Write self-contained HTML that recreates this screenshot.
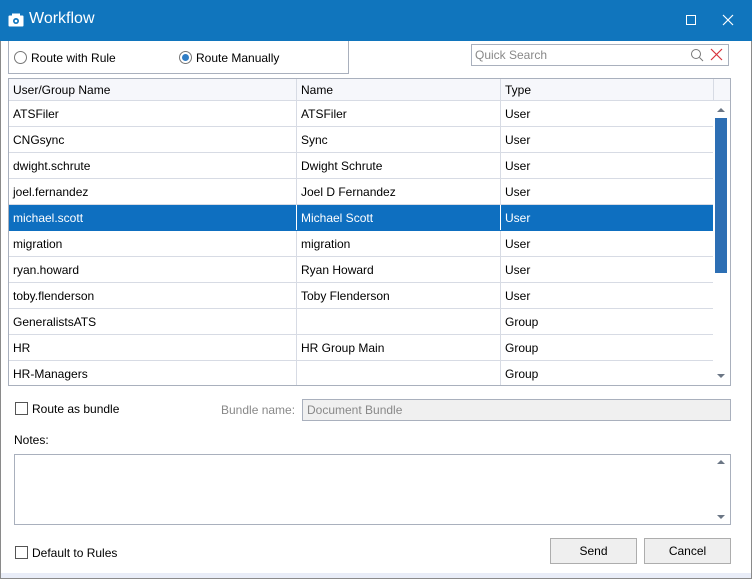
<!DOCTYPE html>
<html><head><style>
*{box-sizing:border-box;margin:0;padding:0}
body{width:752px;height:579px;position:relative;background:#e9edf8;font-family:"Liberation Sans",sans-serif;font-size:12px;color:#000;overflow:hidden}
.abs{position:absolute}
#win{left:0;top:0;width:752px;height:579px;border:1px solid #8a8a8a}
#title{left:0;top:0;width:752px;height:41px;background:#1075bd;color:#fff}
#body{left:1px;top:41px;width:750px;height:532px;background:#fff}
.radio{width:13px;height:13px;border:1px solid #777;border-radius:50%;background:#fff}
.cb{width:13px;height:13px;border:1px solid #555;background:#fff}
table{border-collapse:collapse;table-layout:fixed}
td{border:1px solid #d7dbe4;height:26px;padding-left:4px;white-space:nowrap;overflow:hidden}
tr.h td{height:22px;background:#f6f7fb}
tr.sel td{background:#0e6fc0;color:#fff;border-color:#0e6fc0 #fff #0e6fc0 #fff}
.btn{height:26px;background:#efefef;border:1px solid #adadad;text-align:center;line-height:24px}
</style></head><body>
<div id="win" class="abs"></div>
<div id="title" class="abs">
 <svg class="abs" style="left:8px;top:13px" width="16" height="14" viewBox="0 0 16 14"><rect x="0.5" y="2.5" width="15" height="11" fill="#fff" rx="1"/><rect x="4" y="0.5" width="8" height="3" fill="#fff"/><circle cx="8" cy="8" r="3" fill="#1075bd"/><circle cx="8" cy="8" r="1.3" fill="#fff"/></svg>
 <div class="abs" style="left:29px;top:10px;font-size:16px">Workflow</div>
 <div class="abs" style="left:686px;top:15px;width:10px;height:10px;border:1px solid #fff"></div>
 <svg class="abs" style="left:722px;top:14px" width="12" height="12"><path d="M1 1L11 11M11 1L1 11" stroke="#fff" stroke-width="1.2"/></svg>
</div>
<div id="body" class="abs"></div>
<div class="abs" style="left:8px;top:41px;width:341px;height:33px;border:1px solid #a9b0bd;border-top:none;background:#fff"></div>
<div class="abs radio" style="left:14px;top:51px"></div>
<div class="abs" style="left:31px;top:51px">Route with Rule</div>
<div class="abs radio" style="left:179px;top:51px"><div class="abs" style="left:2px;top:2px;width:7px;height:7px;border-radius:50%;background:#2f7dc5"></div></div>
<div class="abs" style="left:196px;top:51px">Route Manually</div>
<div class="abs" style="left:471px;top:44px;width:258px;height:22px;border:1px solid #a9b0bd;background:#fff"></div>
<div class="abs" style="left:475px;top:48px;color:#888">Quick Search</div>
<svg class="abs" style="left:690px;top:48px" width="14" height="14"><circle cx="6" cy="6" r="4.5" stroke="#777" fill="none"/><path d="M9.5 9.5L13 13" stroke="#777"/></svg>
<svg class="abs" style="left:710px;top:48px" width="14" height="14"><path d="M1 1L12 12M12 1L1 12" stroke="#d8323c" stroke-width="1.2"/></svg>
<div class="abs" style="left:8px;top:78px;width:723px;height:308px;border:1px solid #a9b0bd;overflow:hidden;background:#fff">
<table class="abs" style="left:-1px;top:-1px;width:706px">
<colgroup><col style="width:288px"><col style="width:204px"><col style="width:214px"></colgroup>
<tr class="h"><td>User/Group Name</td><td>Name</td><td>Type</td></tr>
<tr><td>ATSFiler</td><td>ATSFiler</td><td>User</td></tr>
<tr><td>CNGsync</td><td>Sync</td><td>User</td></tr>
<tr><td>dwight.schrute</td><td>Dwight Schrute</td><td>User</td></tr>
<tr><td>joel.fernandez</td><td>Joel D Fernandez</td><td>User</td></tr>
<tr class="sel"><td>michael.scott</td><td>Michael Scott</td><td>User</td></tr>
<tr><td>migration</td><td>migration</td><td>User</td></tr>
<tr><td>ryan.howard</td><td>Ryan Howard</td><td>User</td></tr>
<tr><td>toby.flenderson</td><td>Toby Flenderson</td><td>User</td></tr>
<tr><td>GeneralistsATS</td><td></td><td>Group</td></tr>
<tr><td>HR</td><td>HR Group Main</td><td>Group</td></tr>
<tr><td>HR-Managers</td><td></td><td>Group</td></tr>
</table>
<div class="abs" style="left:704px;top:0;width:17px;height:22px;background:#f6f7fb;border-left:1px solid #d7dbe4;border-bottom:1px solid #d7dbe4"></div>
<div class="abs" style="left:704px;top:22px;width:17px;height:286px;background:#fff"></div>
<svg class="abs" style="left:707px;top:28px" width="10" height="6"><path d="M1 5L5 1L9 5Z" fill="#6b7685"/></svg>
<div class="abs" style="left:706px;top:39px;width:12px;height:155px;background:#2d6fb4"></div>
<svg class="abs" style="left:707px;top:294px" width="10" height="6"><path d="M1 1L5 5L9 1Z" fill="#6b7685"/></svg>
</div>
<div class="abs cb" style="left:15px;top:402px"></div>
<div class="abs" style="left:32px;top:402px">Route as bundle</div>
<div class="abs" style="left:221px;top:403px;color:#888">Bundle name:</div>
<div class="abs" style="left:302px;top:399px;width:429px;height:22px;border:1px solid #a9b0bd;background:#f0f0f0;color:#888;padding:3px 4px">Document Bundle</div>
<div class="abs" style="left:14px;top:433px">Notes:</div>
<div class="abs" style="left:14px;top:454px;width:717px;height:71px;border:1px solid #a9b0bd;background:#fff"></div>
<svg class="abs" style="left:716px;top:459px" width="10" height="6"><path d="M1 5L5 1L9 5Z" fill="#6b7685"/></svg>
<svg class="abs" style="left:716px;top:514px" width="10" height="6"><path d="M1 1L5 5L9 1Z" fill="#6b7685"/></svg>
<div class="abs cb" style="left:15px;top:546px"></div>
<div class="abs" style="left:32px;top:546px">Default to Rules</div>
<div class="abs btn" style="left:550px;top:538px;width:87px">Send</div>
<div class="abs btn" style="left:644px;top:538px;width:87px">Cancel</div>
</body></html>
